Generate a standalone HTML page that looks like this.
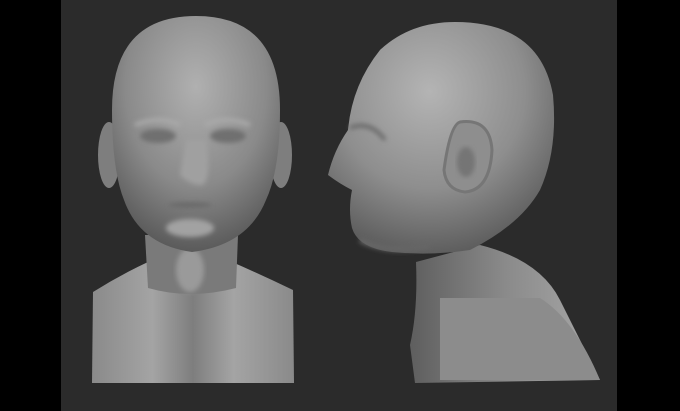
<!DOCTYPE html>
<html><head><style>
html,body{margin:0;padding:0;width:680px;height:411px;overflow:hidden;background:#000}
</style></head><body>
<svg width="680" height="411" viewBox="0 0 680 411" xmlns="http://www.w3.org/2000/svg">
<defs>
<radialGradient id="sk" cx="0.5" cy="0.3" r="0.7">
<stop offset="0" stop-color="#b0b0b0"/><stop offset="0.6" stop-color="#8a8a8a"/><stop offset="1" stop-color="#5a5a5a"/>
</radialGradient>
<radialGradient id="sk2" cx="0.45" cy="0.3" r="0.7">
<stop offset="0" stop-color="#b4b4b4"/><stop offset="0.6" stop-color="#8e8e8e"/><stop offset="1" stop-color="#5e5e5e"/>
</radialGradient>
<linearGradient id="bust" x1="0" y1="0" x2="1" y2="0">
<stop offset="0" stop-color="#8a8a8a"/><stop offset="0.3" stop-color="#a4a4a4"/><stop offset="0.5" stop-color="#7e7e7e"/><stop offset="0.7" stop-color="#a4a4a4"/><stop offset="1" stop-color="#8a8a8a"/>
</linearGradient>
<linearGradient id="neck2" x1="0" y1="0" x2="1" y2="0">
<stop offset="0" stop-color="#5e5e5e"/><stop offset="0.5" stop-color="#8a8a8a"/><stop offset="1" stop-color="#a8a8a8"/>
</linearGradient>
<filter id="b"><feGaussianBlur stdDeviation="2.5"/></filter>
</defs>
<rect x="61" y="0" width="556" height="411" fill="#2b2b2b"/>
<!-- front bust -->
<path d="M92 383 L93 292 Q120 275 148 262 L232 262 Q262 275 293 290 L294 383 Z" fill="url(#bust)"/>
<path d="M145 235 L148 288 Q190 300 236 288 L238 235 Z" fill="#7a7a7a"/>
<ellipse cx="190" cy="270" rx="14" ry="22" fill="#9a9a9a" filter="url(#b)"/>
<!-- ears front -->
<ellipse cx="109" cy="155" rx="11" ry="33" fill="#7e7e7e"/>
<ellipse cx="281" cy="155" rx="11" ry="33" fill="#7e7e7e"/>
<!-- head front -->
<path d="M196 16 Q280 16 280 110 Q280 170 266 200 Q248 245 192 252 Q140 245 124 200 Q112 170 112 110 Q112 16 196 16 Z" fill="url(#sk)"/>
<g filter="url(#b)">
<ellipse cx="158" cy="136" rx="18" ry="7" fill="#707070"/>
<ellipse cx="228" cy="136" rx="18" ry="7" fill="#707070"/>
<path d="M186 140 L180 175 Q190 185 202 185 Q212 180 206 140 Z" fill="#a0a0a0"/>
<ellipse cx="190" cy="205" rx="22" ry="3" fill="#6a6a6a"/>
<ellipse cx="190" cy="228" rx="24" ry="9" fill="#a2a2a2"/>
<path d="M135 125 Q160 115 180 125" stroke="#aaa" stroke-width="4" fill="none"/>
<path d="M205 125 Q225 115 250 125" stroke="#aaa" stroke-width="4" fill="none"/>
</g>
<!-- side bust -->
<path d="M415 383 L410 345 Q418 310 416 262 L480 245 Q540 260 560 300 L600 380 Z" fill="url(#neck2)"/>
<path d="M440 298 L540 298 Q575 320 600 380 L440 380 Z" fill="#8c8c8c"/>
<!-- head side -->
<path d="M455 22 Q540 22 553 95 Q558 150 540 190 Q520 225 470 250 Q430 256 392 252 Q358 248 352 228 Q348 210 352 190 Q340 184 328 175 Q334 150 348 130 Q352 85 380 50 Q410 22 455 22 Z" fill="url(#sk2)"/>
<g filter="url(#b)">
<path d="M350 128 Q370 120 385 140" stroke="#6a6a6a" stroke-width="4" fill="none"/>
<path d="M360 240 Q390 255 430 245" stroke="#666" stroke-width="5" fill="none"/>
</g>
<path d="M460 122 Q490 118 492 150 Q490 190 465 192 Q446 190 444 170 Q450 125 460 122 Z" fill="#8e8e8e" stroke="#767676" stroke-width="3"/>
<ellipse cx="466" cy="162" rx="9" ry="15" fill="#747474" filter="url(#b)"/>
</svg>
</body></html>
